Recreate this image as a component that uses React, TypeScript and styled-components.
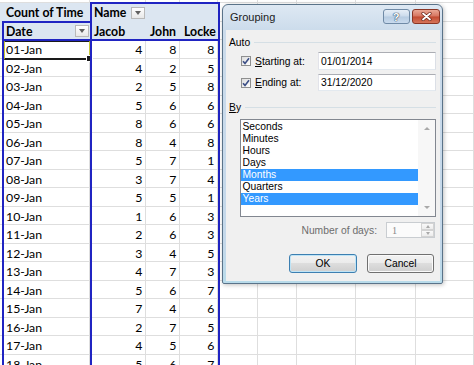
import React from "react";
import styled, { createGlobalStyle } from "styled-components";

const GlobalStyle = createGlobalStyle`
  html, body { margin: 0; padding: 0; background: #fff; }
  body { width: 474px; height: 365px; overflow: hidden; }
  * { box-sizing: border-box; }
`;

const HEAD = "#dce6f1";
const GRID = "#dedede";
const BLUE = "#2024c2";

const Sheet = styled.div`
  position: relative;
  width: 474px;
  height: 365px;
  overflow: hidden;
  display: grid;
  grid-template-columns: 90px 56px 34px 38px 40px 39px 59px 60px 1fr;
  grid-template-rows: 3px;
  grid-auto-rows: 18.5px;
  font-family: Lato, "Liberation Sans", sans-serif;
  font-size: 12.3px;
  color: #000;
  background: #fff;
`;

const Cell = styled.div<{ $head?: boolean; $bold?: boolean; $num?: boolean; $first?: boolean }>`
  display: flex;
  align-items: center;
  justify-content: ${(p) => (p.$num ? "flex-end" : "flex-start")};
  gap: 5px;
  padding: 2px ${(p) => (p.$num ? "2.5px" : "0")} 0 ${(p) => (p.$num ? "0" : p.$first ? "6px" : "4px")};
  border-right: 1px solid ${(p) => (p.$head ? HEAD : GRID)};
  border-bottom: 1px solid ${(p) => (p.$head ? HEAD : GRID)};
  background: ${(p) => (p.$head ? HEAD : "#fff")};
  font-weight: ${(p) => (p.$bold ? 700 : 400)};
  white-space: nowrap;
`;

const FilterCell = styled(Cell)`
  justify-content: space-between;
`;

const FilterButton = styled.span`
  width: 14px;
  height: 12px;
  border: 1px solid #b9b9b9;
  background: linear-gradient(#ffffff, #e8e8e8);
  display: flex;
  align-items: center;
  justify-content: center;
  &::after {
    content: "";
    border-left: 3.5px solid transparent;
    border-right: 3.5px solid transparent;
    border-top: 4px solid #606060;
  }
`;

const DateFrame = styled.div`
  position: absolute;
  left: 1.5px;
  top: 20.5px;
  width: 90px;
  height: 400px;
  border: 2px solid ${BLUE};
`;

const NamesFrame = styled.div`
  position: absolute;
  left: 89.5px;
  top: 1.5px;
  width: 130px;
  height: 400px;
  border: 2px solid ${BLUE};
`;

const HeaderRule = styled.div`
  position: absolute;
  left: 2px;
  top: 39px;
  width: 217px;
  height: 2px;
  background: ${BLUE};
`;

const ActiveCell = styled.div`
  position: absolute;
  left: 3.5px;
  top: 40px;
  width: 86.5px;
  height: 19.5px;
  border-top: 2px solid #1a1a1a;
  border-bottom: 2px solid #1a1a1a;
  border-left: 1.5px solid #c8c83a;
  border-right: 1.5px solid #c8c83a;
  &::after {
    content: "";
    position: absolute;
    right: -3.5px;
    bottom: -4px;
    width: 5px;
    height: 5px;
    background: #1a1a1a;
    border: 1px solid #fff;
  }
`;

/* ---------- dialog ---------- */

const Dialog = styled.div`
  position: absolute;
  left: 222px;
  top: 4px;
  width: 221px;
  height: 280px;
  border: 1px solid #5a7389;
  border-radius: 6px 6px 2px 2px;
  background: linear-gradient(#dee8f3, #cbdbeb 26px, #c4d8ea 240px, #b8dbea);
  display: flex;
  flex-direction: column;
  padding: 0 2px 2px 3px;
  font-family: "Liberation Sans", Arial, sans-serif;
  font-size: 10.3px;
  color: #000;
  box-shadow: 1px 1px 4px rgba(0, 0, 0, 0.25);
`;

const TitleBar = styled.div`
  height: 25px;
  display: flex;
  align-items: flex-start;
  padding-left: 4px;
`;

const Title = styled.span`
  font-size: 11px;
  line-height: 25px;
  color: #1b1b1b;
  flex: 1;
`;

const CaptionButton = styled.span<{ $close?: boolean }>`
  margin-top: 4px;
  margin-left: ${(p) => (p.$close ? "2.5px" : "0")};
  width: ${(p) => (p.$close ? "28px" : "27px")};
  height: 15px;
  border: 1px solid ${(p) => (p.$close ? "#8a3626" : "#6f8aa6")};
  border-radius: 3px;
  background: ${(p) =>
    p.$close
      ? "linear-gradient(#eaa794, #d67560 48%, #c24a30 52%, #d5755c)"
      : "linear-gradient(#e6eef7, #cbdbec 48%, #b6cbe1 52%, #c9dbee)"};
  display: flex;
  align-items: center;
  justify-content: center;
  color: #fff;
  font-weight: 700;
  font-size: 11px;
  text-shadow: 0 0 1px #2f4a66, 0 0 1px #2f4a66, 0 0 1px #2f4a66;
`;

const Body = styled.div`
  flex: 1;
  background: #f0f0f0;
  display: flex;
  flex-direction: column;
  padding: 0 4px 0 3px;
`;

const GroupHead = styled.div<{ $mt: number }>`
  display: flex;
  align-items: center;
  gap: 4px;
  height: 12px;
  margin-top: ${(p) => p.$mt}px;
  &::after {
    content: "";
    flex: 1;
    height: 1px;
    background: #d5dfe5;
  }
`;

const CheckRow = styled.div<{ $mt: number; $h: number }>`
  display: flex;
  align-items: center;
  height: ${(p) => p.$h}px;
  margin-top: ${(p) => p.$mt}px;
  padding-left: 12px;
`;

const CheckBox = styled.span`
  width: 10px;
  height: 10px;
  border: 1px solid #8e8f8f;
  background: linear-gradient(135deg, #dcdcdc, #ffffff);
  display: flex;
  align-items: center;
  justify-content: center;
`;

const CheckLabel = styled.span`
  flex: 1;
  margin-left: 4px;
`;

const Field = styled.div`
  width: 118px;
  height: 100%;
  background: #fff;
  border: 1px solid;
  border-color: #abadb3 #dbdfe6 #e3e9ef #e2e3ea;
  padding-left: 2px;
  display: flex;
  align-items: center;
`;

const ListBox = styled.div`
  margin: 6px 0 0 11px;
  width: 196px;
  height: 98px;
  border: 1px solid #828790;
  background: #fff;
  display: flex;
`;

const Items = styled.div`
  flex: 1;
  padding-top: 1px;
`;

const Item = styled.div<{ $selected?: boolean }>`
  height: 12px;
  line-height: 12px;
  padding-left: 1.5px;
  background: ${(p) => (p.$selected ? "#3399ff" : "transparent")};
  color: ${(p) => (p.$selected ? "#fff" : "#000")};
`;

const ScrollBar = styled.div`
  width: 17px;
  background: #f7f7f7;
  display: flex;
  flex-direction: column;
  justify-content: space-between;
`;

const ScrollArrow = styled.span<{ $down?: boolean }>`
  height: 17px;
  display: flex;
  align-items: center;
  justify-content: center;
  &::after {
    content: "";
    border-left: 3px solid transparent;
    border-right: 3px solid transparent;
    ${(p) => (p.$down ? "border-top" : "border-bottom")}: 3px solid #a9a9a9;
  }
`;

const DaysRow = styled.div`
  margin-top: 5px;
  height: 16px;
  display: flex;
  align-items: center;
  justify-content: flex-end;
  gap: 9px;
  padding-right: 1px;
  color: #6d6d6d;
`;

const SpinBox = styled.div`
  width: 49px;
  height: 100%;
  border: 1px solid #c9cdd1;
  background: #fbfbfb;
  display: flex;
  align-items: center;
  padding-left: 5px;
`;

const SpinValue = styled.span`
  flex: 1;
  font-family: "Liberation Serif", serif;
  color: #8a8a8a;
`;

const SpinButtons = styled.div`
  width: 13px;
  height: 100%;
  display: flex;
  flex-direction: column;
`;

const SpinHalf = styled(ScrollArrow)`
  flex: 1;
  height: auto;
  border: 1px solid #d3d3d3;
  background: linear-gradient(#f9f9f9, #ececec);
  &::after {
    border-left-width: 2.5px;
    border-right-width: 2.5px;
  }
`;

const ButtonRow = styled.div`
  margin-top: 16px;
  height: 19px;
  display: flex;
  justify-content: flex-end;
  gap: 10px;
  padding-right: 2px;
`;

const PushButton = styled.span<{ $default?: boolean; $w: number }>`
  width: ${(p) => p.$w}px;
  height: 100%;
  border: 1px solid ${(p) => (p.$default ? "#3c7fb1" : "#707070")};
  border-radius: 3px;
  background: linear-gradient(#f2f2f2, #ebebeb 50%, #dddddd 50%, #cfcfcf);
  box-shadow: ${(p) => (p.$default ? "inset 0 0 0 1px #bfe4f6" : "inset 0 0 0 1px #fafafa")};
  display: flex;
  align-items: center;
  justify-content: center;
`;

const U = styled.span`
  text-decoration: underline;
  text-underline-offset: 1px;
`;

const rows: [string, number, number, number][] = [
  ["01-Jan", 4, 8, 8],
  ["02-Jan", 4, 2, 5],
  ["03-Jan", 2, 5, 8],
  ["04-Jan", 5, 6, 6],
  ["05-Jan", 8, 6, 6],
  ["06-Jan", 8, 4, 8],
  ["07-Jan", 5, 7, 1],
  ["08-Jan", 3, 7, 4],
  ["09-Jan", 5, 5, 1],
  ["10-Jan", 1, 6, 3],
  ["11-Jan", 2, 6, 3],
  ["12-Jan", 3, 4, 5],
  ["13-Jan", 4, 7, 3],
  ["14-Jan", 5, 6, 7],
  ["15-Jan", 7, 4, 6],
  ["16-Jan", 2, 7, 5],
  ["17-Jan", 4, 5, 6],
  ["18-Jan", 5, 6, 7],
];

const units = ["Seconds", "Minutes", "Hours", "Days", "Months", "Quarters", "Years"];
const picked = ["Months", "Years"];

const Empties = ({ n }: { n: number }) => (
  <>
    {Array.from({ length: n }).map((_, i) => (
      <Cell key={i} />
    ))}
  </>
);

const Tick = () => (
  <svg width="8" height="8" viewBox="0 0 8 8">
    <path d="M1 4.2 L3 6.4 L7 1.2" fill="none" stroke="#3c4f86" strokeWidth="1.6" />
  </svg>
);

const CloseGlyph = () => (
  <svg width="11" height="9" viewBox="0 0 11 9">
    <path d="M2 1.5 L9 7.5 M9 1.5 L2 7.5" stroke="#6a2417" strokeWidth="3.2" strokeLinecap="round" />
    <path d="M2 1.5 L9 7.5 M9 1.5 L2 7.5" stroke="#fff" strokeWidth="1.8" strokeLinecap="round" />
  </svg>
);

const App = () => {
  return (
    <>
      <GlobalStyle />
      <Sheet>
        <Empties n={9} />

        <Cell $head $bold $first>Count of Time</Cell>
        <Cell $head $bold>
          Name <FilterButton />
        </Cell>
        <Cell $head />
        <Cell $head />
        <Empties n={5} />

        <FilterCell $head $bold $first>
          Date <FilterButton />
        </FilterCell>
        <Cell $head $bold>Jacob</Cell>
        <Cell $head $bold>John</Cell>
        <Cell $head $bold>Locke</Cell>
        <Empties n={5} />

        {rows.map(([d, a, b, c]) => (
          <React.Fragment key={d}>
            <Cell $first>{d}</Cell>
            <Cell $num>{a}</Cell>
            <Cell $num>{b}</Cell>
            <Cell $num>{c}</Cell>
            <Empties n={5} />
          </React.Fragment>
        ))}

        <ActiveCell />
        <DateFrame />
        <NamesFrame />
        <HeaderRule />

        <Dialog>
          <TitleBar>
            <Title>Grouping</Title>
            <CaptionButton>?</CaptionButton>
            <CaptionButton $close>
              <CloseGlyph />
            </CaptionButton>
          </TitleBar>
          <Body>
            <GroupHead $mt={6}>Auto</GroupHead>
            <CheckRow $mt={4} $h={18}>
              <CheckBox>
                <Tick />
              </CheckBox>
              <CheckLabel>
                <U>S</U>tarting at:
              </CheckLabel>
              <Field>01/01/2014</Field>
            </CheckRow>
            <CheckRow $mt={4} $h={17}>
              <CheckBox>
                <Tick />
              </CheckBox>
              <CheckLabel>
                <U>E</U>nding at:
              </CheckLabel>
              <Field>31/12/2020</Field>
            </CheckRow>
            <GroupHead $mt={10}>
              <span>
                <U>B</U>y
              </span>
            </GroupHead>
            <ListBox>
              <Items>
                {units.map((u) => (
                  <Item key={u} $selected={picked.includes(u)}>
                    {u}
                  </Item>
                ))}
              </Items>
              <ScrollBar>
                <ScrollArrow />
                <ScrollArrow $down />
              </ScrollBar>
            </ListBox>
            <DaysRow>
              <span>Number of days:</span>
              <SpinBox>
                <SpinValue>1</SpinValue>
                <SpinButtons>
                  <SpinHalf />
                  <SpinHalf $down />
                </SpinButtons>
              </SpinBox>
            </DaysRow>
            <ButtonRow>
              <PushButton $default $w={68}>OK</PushButton>
              <PushButton $w={67}>Cancel</PushButton>
            </ButtonRow>
          </Body>
        </Dialog>
      </Sheet>
    </>
  );
};

export default App;
